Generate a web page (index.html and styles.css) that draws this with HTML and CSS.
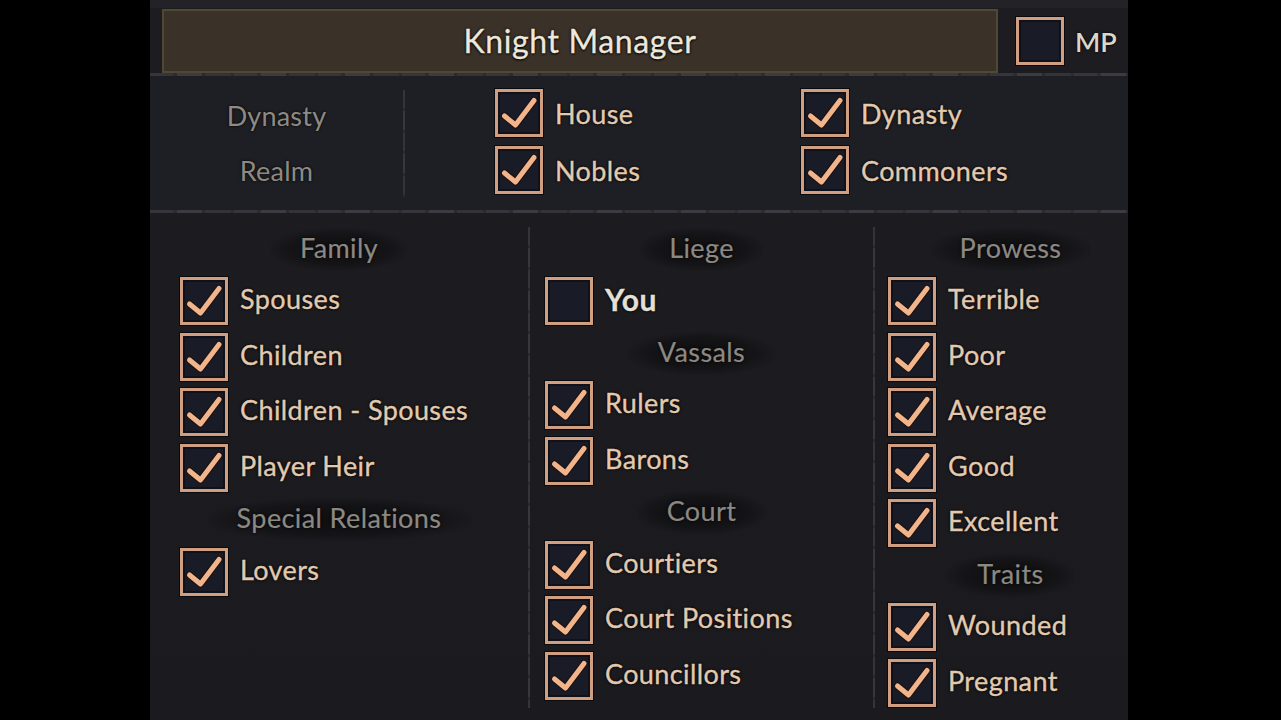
FILE: index.html
```html
<!DOCTYPE html>
<html lang="en">
<head>
<meta charset="utf-8">
<title>Knight Manager</title>
<link rel="stylesheet" href="styles.css">
</head>
<body>
<svg width="0" height="0" class="defs">
  <defs>
    <symbol id="tick" viewBox="0 0 42 42">
      <path d="M6.5 24 L17.5 33 L36 8.5" fill="none" stroke="#1a0f0a" stroke-opacity="0.6" stroke-width="7.5" stroke-linecap="round" stroke-linejoin="round"/>
      <path d="M6.5 24 L17.5 33 L36 8.5" fill="none" stroke="#f2b48a" stroke-width="5" stroke-linecap="round" stroke-linejoin="round"/>
    </symbol>
  </defs>
</svg>
<div class="stage">
  <main class="panel">
    <header class="topbar">
      <div class="title">Knight Manager</div>
      <div class="mp">
        <span class="cb"></span>
        <span class="mp-label">MP</span>
      </div>
    </header>
    <div class="hline"></div>
    <section class="filters">
      <div class="scope">
        <div class="scope-item">Dynasty</div>
        <div class="scope-item">Realm</div>
      </div>
      <div class="vline short"></div>
      <div class="filter-grid">
        <div class="row frow"><span class="cb"><svg><use href="#tick"/></svg></span><span class="label">House</span></div>
        <div class="row frow"><span class="cb"><svg><use href="#tick"/></svg></span><span class="label">Dynasty</span></div>
        <div class="row frow"><span class="cb"><svg><use href="#tick"/></svg></span><span class="label">Nobles</span></div>
        <div class="row frow"><span class="cb"><svg><use href="#tick"/></svg></span><span class="label">Commoners</span></div>
      </div>
    </section>
    <div class="hline"></div>
    <section class="lists">
      <div class="col col-family">
        <div class="head"><span>Family</span></div>
        <div class="row"><span class="cb"><svg><use href="#tick"/></svg></span><span class="label">Spouses</span></div>
        <div class="row"><span class="cb"><svg><use href="#tick"/></svg></span><span class="label">Children</span></div>
        <div class="row"><span class="cb"><svg><use href="#tick"/></svg></span><span class="label">Children - Spouses</span></div>
        <div class="row"><span class="cb"><svg><use href="#tick"/></svg></span><span class="label">Player Heir</span></div>
        <div class="head"><span>Special Relations</span></div>
        <div class="row"><span class="cb"><svg><use href="#tick"/></svg></span><span class="label">Lovers</span></div>
      </div>
      <div class="vline tall"></div>
      <div class="col col-liege">
        <div class="head"><span>Liege</span></div>
        <div class="row"><span class="cb"></span><span class="label you">You</span></div>
        <div class="head"><span>Vassals</span></div>
        <div class="row"><span class="cb"><svg><use href="#tick"/></svg></span><span class="label">Rulers</span></div>
        <div class="row"><span class="cb"><svg><use href="#tick"/></svg></span><span class="label">Barons</span></div>
        <div class="head"><span>Court</span></div>
        <div class="row"><span class="cb"><svg><use href="#tick"/></svg></span><span class="label">Courtiers</span></div>
        <div class="row"><span class="cb"><svg><use href="#tick"/></svg></span><span class="label">Court Positions</span></div>
        <div class="row"><span class="cb"><svg><use href="#tick"/></svg></span><span class="label">Councillors</span></div>
      </div>
      <div class="vline tall"></div>
      <div class="col col-prowess">
        <div class="head"><span>Prowess</span></div>
        <div class="row"><span class="cb"><svg><use href="#tick"/></svg></span><span class="label">Terrible</span></div>
        <div class="row"><span class="cb"><svg><use href="#tick"/></svg></span><span class="label">Poor</span></div>
        <div class="row"><span class="cb"><svg><use href="#tick"/></svg></span><span class="label">Average</span></div>
        <div class="row"><span class="cb"><svg><use href="#tick"/></svg></span><span class="label">Good</span></div>
        <div class="row"><span class="cb"><svg><use href="#tick"/></svg></span><span class="label">Excellent</span></div>
        <div class="head"><span>Traits</span></div>
        <div class="row"><span class="cb"><svg><use href="#tick"/></svg></span><span class="label">Wounded</span></div>
        <div class="row"><span class="cb"><svg><use href="#tick"/></svg></span><span class="label">Pregnant</span></div>
      </div>
    </section>
  </main>
</div>
</body>
</html>
```
FILE: styles.css
```css
* { box-sizing: border-box; }

html, body {
  margin: 0;
  padding: 0;
  background: #000;
}

body {
  width: 1281px;
  height: 720px;
  overflow: hidden;
  font-family: "Lato", "Noto Sans", sans-serif;
}

.defs { position: absolute; }

.stage {
  display: flex;
  height: 720px;
  padding-left: 150px;
}

.panel {
  width: 978px;
  height: 720px;
  background: #1c1c20;
  background-image: linear-gradient(180deg, #232327 0, #232327 8px, #1d1d21 8px, #1b1b1f 100%);
  display: flex;
  flex-direction: column;
}

/* ---------- top bar ---------- */
.topbar {
  display: flex;
  align-items: center;
  padding: 9px 0 0 12px;
  height: 73px;
}

.title {
  width: 836px;
  height: 64px;
  background: #3a3128;
  border: 2px solid #4f4934;
  display: flex;
  align-items: center;
  justify-content: center;
  color: #ede7dc;
  font-size: 32px;
  letter-spacing: 0.6px;
  -webkit-text-stroke: 0.3px #ede7dc;
  text-shadow: 0 0 3px #000, 0 1px 2px #000;
  padding-bottom: 2px;
}

.mp {
  display: flex;
  align-items: center;
  margin-left: 18px;
  gap: 11px;
}

.mp-label {
  color: #dcd5c9;
  font-size: 27px;
  font-weight: 600;
  text-shadow: 0 0 3px #000;
}

/* ---------- lines ---------- */
.hline {
  height: 3px;
  background: repeating-linear-gradient(90deg, #35353b 0 23px, #2c2c31 23px 27px, #3b3b41 27px 52px, #29292e 52px 55px, #333338 55px 81px, #2b2b30 81px 84px);
}

.vline {
  width: 2px;
  background: repeating-linear-gradient(180deg, #34343a 0 18px, #29292e 18px 21px, #37373d 21px 40px, #2a2a2f 40px 43px);
  flex: none;
}

.vline.short {
  align-self: center;
  height: 107px;
}

.vline.tall {
  margin-top: 14px;
  margin-bottom: 12px;
}

/* ---------- filters ---------- */
.filters {
  display: flex;
  height: 134px;
  background: #1e1f24;
}

.scope {
  width: 253px;
  display: flex;
  flex-direction: column;
  justify-content: center;
  align-items: center;
  gap: 23px;
  padding-top: 0;
}

.scope-item {
  color: #8e8a83;
  font-size: 27px;
  letter-spacing: 0.2px;
  text-shadow: 0 0 3px #000;
  line-height: 32px;
}

.filter-grid {
  margin-left: 90px;
  padding-top: 13px;
  display: grid;
  grid-template-columns: 306px 1fr;
  grid-auto-rows: 48px;
  row-gap: 9px;
  align-content: start;
}

/* ---------- checkbox rows ---------- */
.row {
  display: flex;
  align-items: center;
  gap: 12px;
  height: 55.5px;
}

.frow { height: 48px; }

.cb {
  flex: none;
  width: 48px;
  height: 48px;
  border: 3px solid #d09e80;
  background: #191b27;
  box-shadow: 0 0 0 1px #0b0b0e, inset 0 0 0 2px #101119;
  display: flex;
  align-items: center;
  justify-content: center;
}

.cb svg {
  width: 42px;
  height: 42px;
}

.label {
  color: #e2cab0;
  font-size: 27px;
  letter-spacing: 0.4px;
  -webkit-text-stroke: 0.35px #e2cab0;
  text-shadow: 0 0 3px #000, 0 0 2px #000;
  padding-bottom: 5px;
}

.frow .label { padding-bottom: 0; }

.label.you {
  color: #e4e0d8;
  -webkit-text-stroke: 0.3px #e4e0d8;
  font-weight: 700;
  font-size: 30px;
  letter-spacing: 0.6px;
}

/* ---------- lists ---------- */
.lists {
  display: flex;
  flex: 1;
}

.col {
  display: flex;
  flex-direction: column;
  padding-top: 12px;
}

.col-family {
  width: 378px;
  padding-left: 30px;
}

.col-liege {
  width: 343px;
  padding-left: 15px;
}

.col-prowess {
  flex: 1;
  padding-left: 13px;
}

.head {
  height: 48.5px;
  display: flex;
  align-items: center;
  justify-content: center;
  margin-left: var(--head-shift, 0px);
}

.col-family .head { --head-shift: -30px; }
.col-liege .head { --head-shift: -15px; }
.col-prowess .head { --head-shift: 5px; }

.head span {
  color: #8c8882;
  font-size: 27px;
  letter-spacing: 0.4px;
  -webkit-text-stroke: 0.2px #8c8882;
  padding: 3px 30px 7px;
  background: radial-gradient(ellipse at center, rgba(8, 8, 10, 0.7) 0%, rgba(8, 8, 10, 0.4) 50%, rgba(8, 8, 10, 0) 75%);
  text-shadow: 0 0 3px #000;
}
```
